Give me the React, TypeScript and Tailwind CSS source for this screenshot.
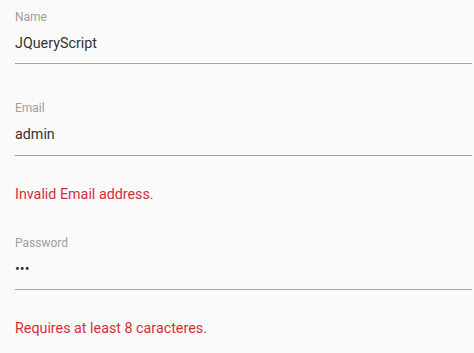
const Field = ({
  label,
  value,
  className = "",
}: {
  label: string;
  value: string;
  className?: string;
}) => {
  return (
    <div className={`border-b border-[#a3a3a3] pb-[10px] ${className}`}>
      <label className="block text-[12px] leading-[16px] text-[#9e9e9e]">
        {label}
      </label>
      <div className="mt-[8px] text-[14.3px] leading-[20px] text-[#333333]">
        {value}
      </div>
    </div>
  );
};

const ErrorText = ({ children }: { children: string }) => (
  <p className="mt-[28px] text-[14.3px] leading-[20px] text-[#d3303b]">
    {children}
  </p>
);

const App = () => {
  return (
    <div className="min-h-screen bg-[#fafafa] pl-[15px] pr-[2px] pt-[9px] font-['Roboto',sans-serif]">
      <form>
        <Field label="Name" value="JQueryScript" />
        <Field label="Email" value="admin" className="mt-[36px] pb-[11px]" />
        <ErrorText>Invalid Email address.</ErrorText>
        <Field label="Password" value="•••" className="mt-[31px]" />
        <ErrorText>Requires at least 8 caracteres.</ErrorText>
      </form>
    </div>
  );
};

export default App;
